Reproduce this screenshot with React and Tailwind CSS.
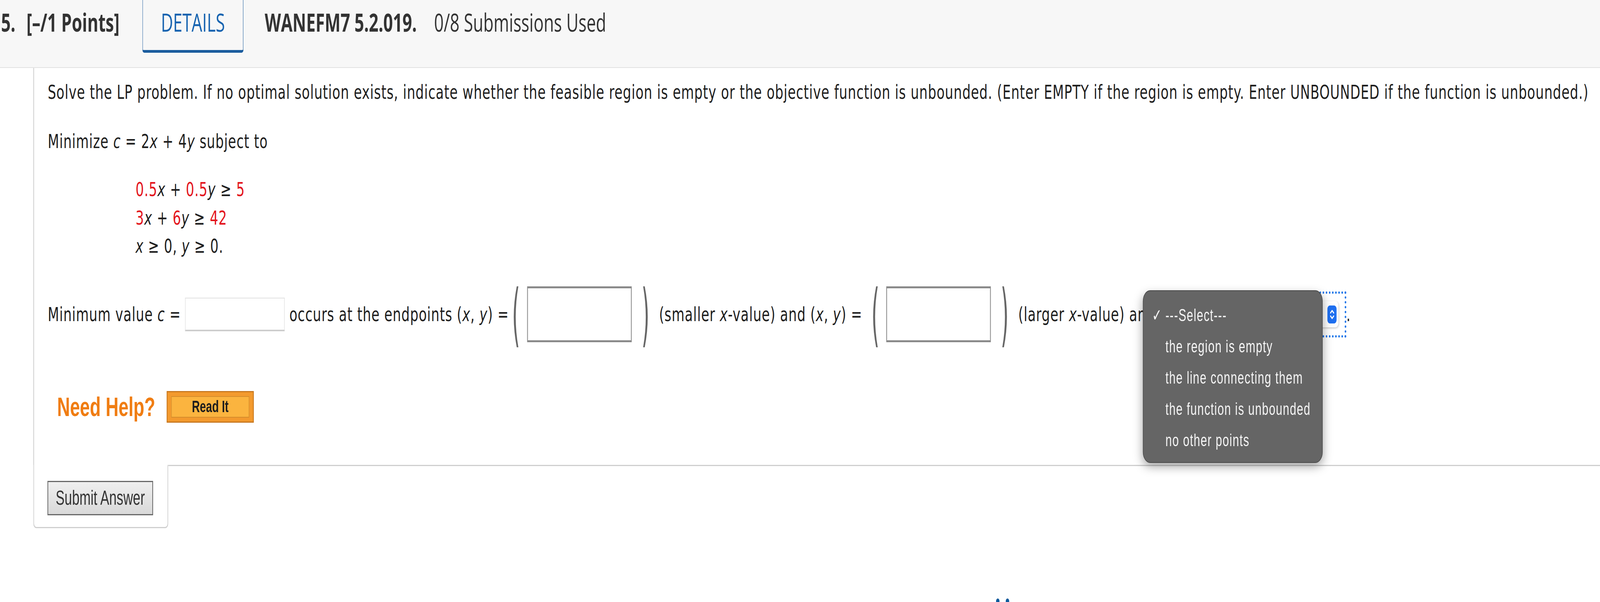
import React from "react";

// WebAssign question card. Laid out at the 6104px reference scale; the browser
// window is only 4096px wide, so the whole page is squeezed on x to fit it.

function V({ children }) {
  return <i className="italic">{children}</i>;
}

function Red({ children }) {
  return <span className="text-[#e3151d]">{children}</span>;
}

function Paren({ right, className = "" }) {
  return (
    <span
      className={`inline-block origin-center scale-x-[1.3] scale-y-[2.9] text-[60px] leading-none tracking-normal text-[#666] ${className}`}
    >
      {right ? ")" : "("}
    </span>
  );
}

function PointBox() {
  return (
    <span className="inline-block h-[143px] w-[399px] border-[3px] border-t-[5px] border-b-[5px] border-[#8a8a8a] bg-white" />
  );
}

const options = [
  "---Select---",
  "the region is empty",
  "the line connecting them",
  "the function is unbounded",
  "no other points",
];

export default function App() {
  return (
    <div className="h-[1541px] w-screen overflow-hidden bg-white">
      <div className="relative h-[1541px] w-[6104px] origin-top-left scale-x-[0.67104] bg-white">
        {/* header bar */}
        <div className="flex h-[174px] items-start border-b-2 border-[#e2e2e2] bg-[#f7f7f7] font-['Open_Sans',sans-serif] text-[64px] leading-[88px] text-[#333]">
          <span className="pl-[4px] pt-[13px] font-bold">5.</span>
          <span className="ml-[42px] pt-[13px] font-bold">[–/1 Points]</span>
          <div className="ml-[87px] flex h-[135px] w-[386px] justify-center rounded-b-[8px] border-x-2 border-b-[7px] border-[#1b5c9e] pt-[13px] text-[#1663b0]">
            DETAILS
          </div>
          <span className="ml-[81px] pt-[13px] font-bold">WANEFM7 5.2.019.</span>
          <span className="ml-[66px] pt-[13px]">0/8 Submissions Used</span>
        </div>

        {/* question card */}
        <div className="ml-[127px] font-['DejaVu_Sans',Verdana,sans-serif] text-[50px] leading-[72px] tracking-[1.32px] text-[#1e1e1e]">
          <div className="border-l-[3px] border-[#cfcfcf] pb-[108px] pl-[52px] pt-[26px]">
            <p className="whitespace-nowrap">
              Solve the LP problem. If no optimal solution exists, indicate whether the feasible region is empty or the
              objective function is unbounded. (Enter EMPTY if the region is empty. Enter UNBOUNDED if the function is
              unbounded.)
            </p>
            <p className="mt-[54px]">
              Minimize <V>c</V> = 2<V>x</V> + 4<V>y</V> subject to
            </p>
            <div className="ml-[335px] mt-[51px] leading-[72.5px]">
              <div>
                <Red>0.5</Red>
                <V>x</V> + <Red>0.5</Red>
                <V>y</V> ≥ <Red>5</Red>
              </div>
              <div>
                <Red>3</Red>
                <V>x</V> + <Red>6</Red>
                <V>y</V> ≥ <Red>42</Red>
              </div>
              <div>
                <V>x</V> ≥ 0, <V>y</V> ≥ 0.
              </div>
            </div>

            <div className="mt-[58px] flex h-[160px] items-center whitespace-nowrap">
              <span>
                Minimum value <V>c</V> =
              </span>
              <span className="ml-[16px] h-[86px] w-[380px] border-2 border-b-4 border-[#e1e1e1] border-b-[#cdcdcd] bg-white" />
              <span className="ml-[18px]">
                occurs at the endpoints (<V>x</V>, <V>y</V>) =
              </span>
              <Paren className="ml-[16px]" />
              <span className="ml-[30px] flex">
                <PointBox />
              </span>
              <Paren right className="ml-[41px]" />
              <span className="ml-[40px]">
                (smaller <V>x</V>-value) and (<V>x</V>, <V>y</V>) =
              </span>
              <Paren className="ml-[38px]" />
              <span className="ml-[30px] flex">
                <PointBox />
              </span>
              <Paren right className="ml-[41px]" />
              <span className="ml-[40px]">
                (larger <V>x</V>-value) and
              </span>
              <span className="ml-[30px] flex h-[118px] w-[700px] items-center justify-end border-[6px] border-dotted border-[#1a73e8] pr-[24px]">
                <span className="flex h-[67px] w-[600px] items-center justify-end rounded-[12px] bg-white pr-[7px] shadow-[0_2px_6px_rgba(0,0,0,0.25)]">
                  <span className="flex h-[46px] w-[35px] items-center justify-center rounded-[9px] bg-[#1e6ff0]">
                    <svg width="20" height="30" viewBox="0 0 20 30" fill="none" stroke="white" strokeWidth="3.5" strokeLinecap="round" strokeLinejoin="round">
                      <path d="M4 11 L10 5 L16 11" />
                      <path d="M4 19 L10 25 L16 19" />
                    </svg>
                  </span>
                </span>
              </span>
              <span>.</span>
            </div>

            <div className="mt-[116px] flex h-[81px] items-center tracking-normal">
              <span className="ml-[36px] font-['Liberation_Sans',Arial,sans-serif] text-[68px] font-bold text-[#f07d12]">
                Need Help?
              </span>
              <button className="ml-[44px] flex h-[81px] w-[332px] items-center justify-center border-[3px] border-[#c7771f] bg-[#f39a2e] px-[14px] py-[10px]">
                <span className="flex h-full w-full items-center justify-center border-2 border-[#d48c2c] bg-[#fbb43f] font-['Liberation_Sans',Arial,sans-serif] text-[42px] font-bold leading-none text-[#1d1d1d]">
                  Read It
                </span>
              </button>
            </div>
          </div>

          <div className="flex tracking-normal">
            <div className="w-[515px] rounded-b-[12px] border-x-[3px] border-b-[3px] border-[#cfcfcf] pb-[30px] pl-[51px] pt-[41px]">
              <button className="flex h-[88px] w-[403px] items-center justify-center border-[3px] border-[#686868] bg-gradient-to-b from-[#efefef] to-[#d9d9d9] font-['Liberation_Sans',Arial,sans-serif] text-[51px] leading-none text-[#333]">
                Submit Answer
              </button>
            </div>
            <div className="flex-1 border-t-[3px] border-[#cfcfcf]" />
          </div>
        </div>

        {/* tops of the footer marks */}
        <div className="mt-[180px] flex gap-[24px] pl-[3800px]">
          <span className="h-[10px] w-[13px] rounded-t-full bg-[#0d5a9c]" />
          <span className="h-[10px] w-[13px] rounded-t-full bg-[#0d5a9c]" />
        </div>

        {/* open native select menu */}
        <div className="absolute left-[4360px] top-[743px] h-[442px] w-[686px] rounded-[28px] border-2 border-[#4a4a4a] bg-[#656565] pt-[22px] font-['Liberation_Sans',Arial,sans-serif] text-[44px] tracking-[2px] text-[#f4f4f4] shadow-[0_10px_30px_rgba(0,0,0,0.35)]">
          {options.map((o, i) => (
            <div key={o} className="flex h-[80px] items-center">
              <span className="w-[84px] pl-[33px] font-['DejaVu_Sans',sans-serif]">{i === 0 ? "✓" : ""}</span>
              <span>{o}</span>
            </div>
          ))}
        </div>
      </div>
    </div>
  );
}
